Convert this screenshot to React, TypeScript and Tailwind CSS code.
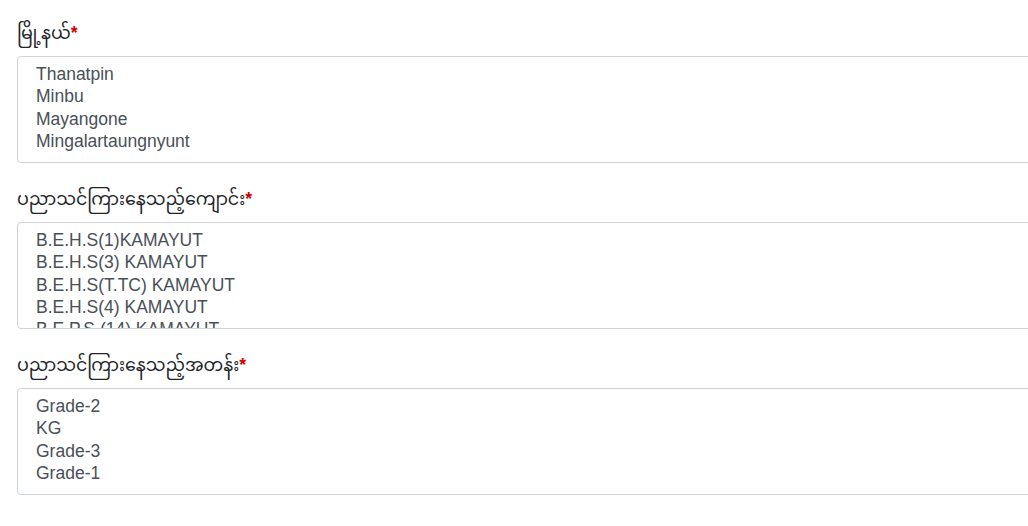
import React from 'react';

const fields = [
  {
    label: 'မြို့နယ်',
    options: ['Thanatpin', 'Minbu', 'Mayangone', 'Mingalartaungnyunt'],
  },
  {
    label: 'ပညာသင်ကြားနေသည့်ကျောင်း',
    options: [
      'B.E.H.S(1)KAMAYUT',
      'B.E.H.S(3) KAMAYUT',
      'B.E.H.S(T.TC) KAMAYUT',
      'B.E.H.S(4) KAMAYUT',
      'B.E.P.S (14) KAMAYUT',
      'B.E.P.S (15) KAMAYUT',
    ],
  },
  {
    label: 'ပညာသင်ကြားနေသည့်အတန်း',
    options: ['Grade-2', 'KG', 'Grade-3', 'Grade-1'],
  },
];

export default function App() {
  return (
    <div className="w-[1028px] h-[526px] overflow-hidden bg-white pl-[17px] pt-[19px] font-['Liberation_Sans','Noto_Sans_Myanmar','Padauk',sans-serif]">
      {fields.map((f, i) => (
        <div key={i} className="mb-[22px] w-[1100px]">
          {/* label */}
          <div className="h-[37px] text-[17.5px] leading-[28px] text-[#212529]">
            {f.label}
            <span className="text-[#cc0000] font-bold">*</span>
          </div>
          <div className="h-[107px] overflow-hidden rounded-[4px] border border-[#ced4da] bg-white pl-[18px] pt-[6px] text-[17.5px] leading-[22.3px] text-[#495057]">
            {f.options.map((o) => (
              <div key={o} className="whitespace-nowrap">
                {o}
              </div>
            ))}
          </div>
        </div>
      ))}
    </div>
  );
}
